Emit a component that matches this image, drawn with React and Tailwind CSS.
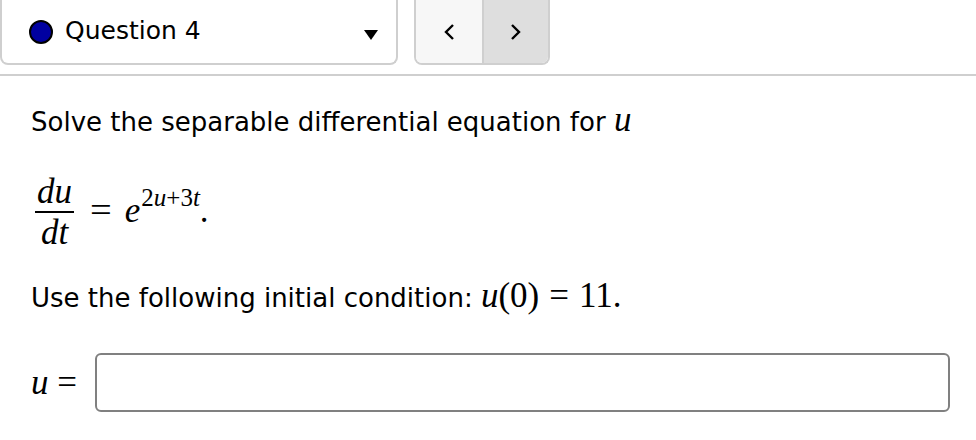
import React from "react";

const body = { fontFamily: "'DejaVu Sans', Verdana, sans-serif" };
const math = { fontFamily: "'Liberation Serif', 'DejaVu Serif', serif" };

function V({ children }) {
    return <span className="italic">{children}</span>;
}

function Fraction() {
    return (
        <span className="ml-[4px] flex flex-col items-center leading-none">
            <span className="px-[2px] pb-[2px]">
                <V>du</V>
            </span>
            <span className="w-full border-t-[2px] border-black"></span>
            <span className="px-[2px] pt-[2px]">
                <V>dt</V>
            </span>
        </span>
    );
}

export default function App() {
    return (
        <div className="w-[976px] h-[440px] bg-white text-black overflow-hidden" style={body}>
            <div className="flex items-start h-[76px] border-b-2 border-[#cfcfcf]">
                <div className="w-[398px] h-[65px] border-2 border-t-0 border-[#cfcfcf] rounded-b-[8px] flex items-center pl-[27px] pr-[18px]">
                    <span className="w-[24px] h-[24px] rounded-full bg-[#0000a0] border-2 border-black shrink-0"></span>
                    <span className="ml-[12px] text-[25px] leading-none pb-[2px]">Question 4</span>
                    <span className="ml-auto mt-[6px]">
                        <svg width="14" height="10" viewBox="0 0 14 10">
                            <path d="M0 0 L14 0 L7 10 Z" fill="#000" />
                        </svg>
                    </span>
                </div>
                <div className="ml-[16px] w-[136px] h-[65px] border-2 border-t-0 border-[#cfcfcf] rounded-b-[8px] flex overflow-hidden">
                    <div className="w-[66px] h-full bg-[#f7f7f7] flex items-center justify-center">
                        <svg width="12" height="18" viewBox="0 0 12 18">
                            <path d="M10 2 L3 9 L10 16" fill="none" stroke="#000" strokeWidth="2.4" />
                        </svg>
                    </div>
                    <div className="w-[2px] h-full bg-[#cfcfcf]"></div>
                    <div className="flex-1 h-full bg-[#dedede] flex items-center justify-center">
                        <svg width="12" height="18" viewBox="0 0 12 18">
                            <path d="M2 2 L9 9 L2 16" fill="none" stroke="#000" strokeWidth="2.4" />
                        </svg>
                    </div>
                </div>
            </div>

            <div className="pl-[31px]">
                <p className="mt-[29px] text-[26px] leading-[30px]">
                    Solve the separable differential equation for{" "}
                    <span className="text-[35px]" style={math}>
                        <V>u</V>
                    </span>
                </p>

                <div className="mt-[37px] flex items-start text-[35px]" style={math}>
                    <Fraction />
                    <span className="ml-[17px] mt-[11px] leading-none whitespace-nowrap">
                        <span className="inline-block scale-x-110">=</span>
                        <span className="ml-[14px]">
                            <V>e</V>
                        </span>
                        <span className="text-[25px] align-[16px] leading-none ml-[1px]">
                            2<V>u</V>+3<V>t</V>
                        </span>
                        .
                    </span>
                </div>

                <p className="mt-[31px] text-[26px] leading-[30px]">
                    Use the following initial condition:{" "}
                    <span className="text-[35px] whitespace-nowrap" style={math}>
                        <V>u</V>(0)
                        <span className="mx-[10px]">=</span>
                        11.
                    </span>
                </p>

                <div className="mt-[40px] flex items-center">
                    <span className="text-[35px] w-[64px] leading-none" style={math}>
                        <V>u</V> =
                    </span>
                    <div className="w-[855px] h-[59px] border-2 border-[#808080] rounded-[6px] bg-white"></div>
                </div>
            </div>
        </div>
    );
}
